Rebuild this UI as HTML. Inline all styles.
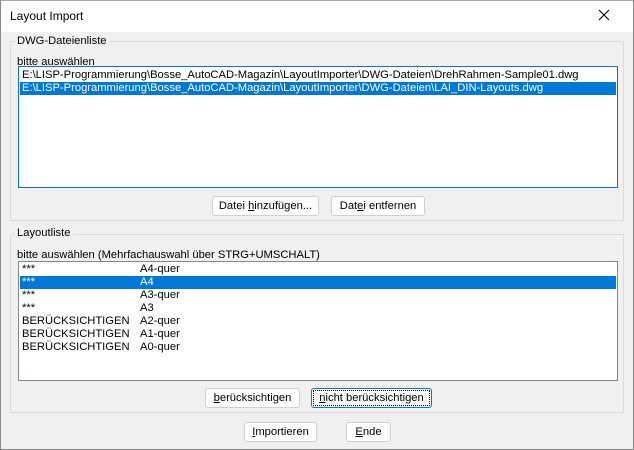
<!DOCTYPE html><html><head><style>
*{margin:0;padding:0;box-sizing:border-box}
body{width:634px;height:450px;background:#f0f0f0;font-family:"Liberation Sans",sans-serif;font-size:11.2px;color:#000;position:relative;overflow:hidden}
.a{position:absolute}
.title{left:0;top:0;width:634px;height:32px;background:#fff}
.grp{border:1px solid #dcdcdc;background:#f0f0f0}
.lg{background:#f0f0f0;padding:0 2px}
.lb{background:#fff;border:1px solid #828790}
.row{position:absolute;left:1px;right:1px;height:13px;line-height:13px;padding-left:2px;white-space:nowrap}
.sel{background:#0078d7;color:#fff}
.btn{background:#fdfdfd;border:1px solid #d0d0d0;border-radius:3px;text-align:center;line-height:18px}
u{text-decoration:underline}
</style></head><body>
<div class="a title"></div>
<div class="a" style="left:10px;top:9px;font-size:12px">Layout Import</div>
<svg class="a" style="left:598px;top:9px" width="12" height="12"><path d="M1 1L11 11M11 1L1 11" stroke="#000" stroke-width="1.1"/></svg>

<div class="a grp" style="left:10px;top:41px;width:614px;height:180px"></div>
<div class="a lg" style="left:15px;top:35px">DWG-Dateienliste</div>
<div class="a" style="left:17px;top:56px">bitte auswählen</div>
<div class="a lb" style="left:18px;top:66px;width:600px;height:122px;border-color:#0078d7">
<div class="row" style="top:2px">E:\LISP-Programmierung\Bosse_AutoCAD-Magazin\LayoutImporter\DWG-Dateien\DrehRahmen-Sample01.dwg</div>
<div class="row sel" style="top:15px">E:\LISP-Programmierung\Bosse_AutoCAD-Magazin\LayoutImporter\DWG-Dateien\LAI_DIN-Layouts.dwg</div>
</div>
<div class="a btn" style="left:212px;top:196px;width:107px;height:20px">Datei <u>h</u>inzufügen...</div>
<div class="a btn" style="left:331px;top:196px;width:94px;height:20px">Dat<u>e</u>i entfernen</div>

<div class="a grp" style="left:10px;top:234px;width:614px;height:179px"></div>
<div class="a lg" style="left:15px;top:227px">Layoutliste</div>
<div class="a" style="left:17px;top:249px">bitte auswählen (Mehrfachauswahl über STRG+UMSCHALT)</div>
<div class="a lb" style="left:18px;top:261px;width:600px;height:120px">
<div class="row" style="top:1px">***<span class="a" style="left:120px">A4-quer</span></div>
<div class="row sel" style="top:14px">***<span class="a" style="left:120px">A4</span></div>
<div class="row" style="top:27px">***<span class="a" style="left:120px">A3-quer</span></div>
<div class="row" style="top:40px">***<span class="a" style="left:120px">A3</span></div>
<div class="row" style="top:53px">BERÜCKSICHTIGEN<span class="a" style="left:120px">A2-quer</span></div>
<div class="row" style="top:66px">BERÜCKSICHTIGEN<span class="a" style="left:120px">A1-quer</span></div>
<div class="row" style="top:79px">BERÜCKSICHTIGEN<span class="a" style="left:120px">A0-quer</span></div>
</div>
<div class="a btn" style="left:205px;top:388px;width:95px;height:20px"><u>b</u>erücksichtigen</div>
<div class="a btn" style="left:311px;top:388px;width:121px;height:20px;border:1px solid #0078d7;outline:1px dotted #000;outline-offset:-3px"><u>n</u>icht berücksichtigen</div>
<div class="a btn" style="left:244px;top:422px;width:73px;height:20px"><u>I</u>mportieren</div>
<div class="a btn" style="left:346px;top:422px;width:45px;height:20px"><u>E</u>nde</div>
<div class="a" style="left:0;top:0;width:634px;height:450px;border:1px solid #888;border-top-color:#aaa;pointer-events:none"></div>
</body></html>
